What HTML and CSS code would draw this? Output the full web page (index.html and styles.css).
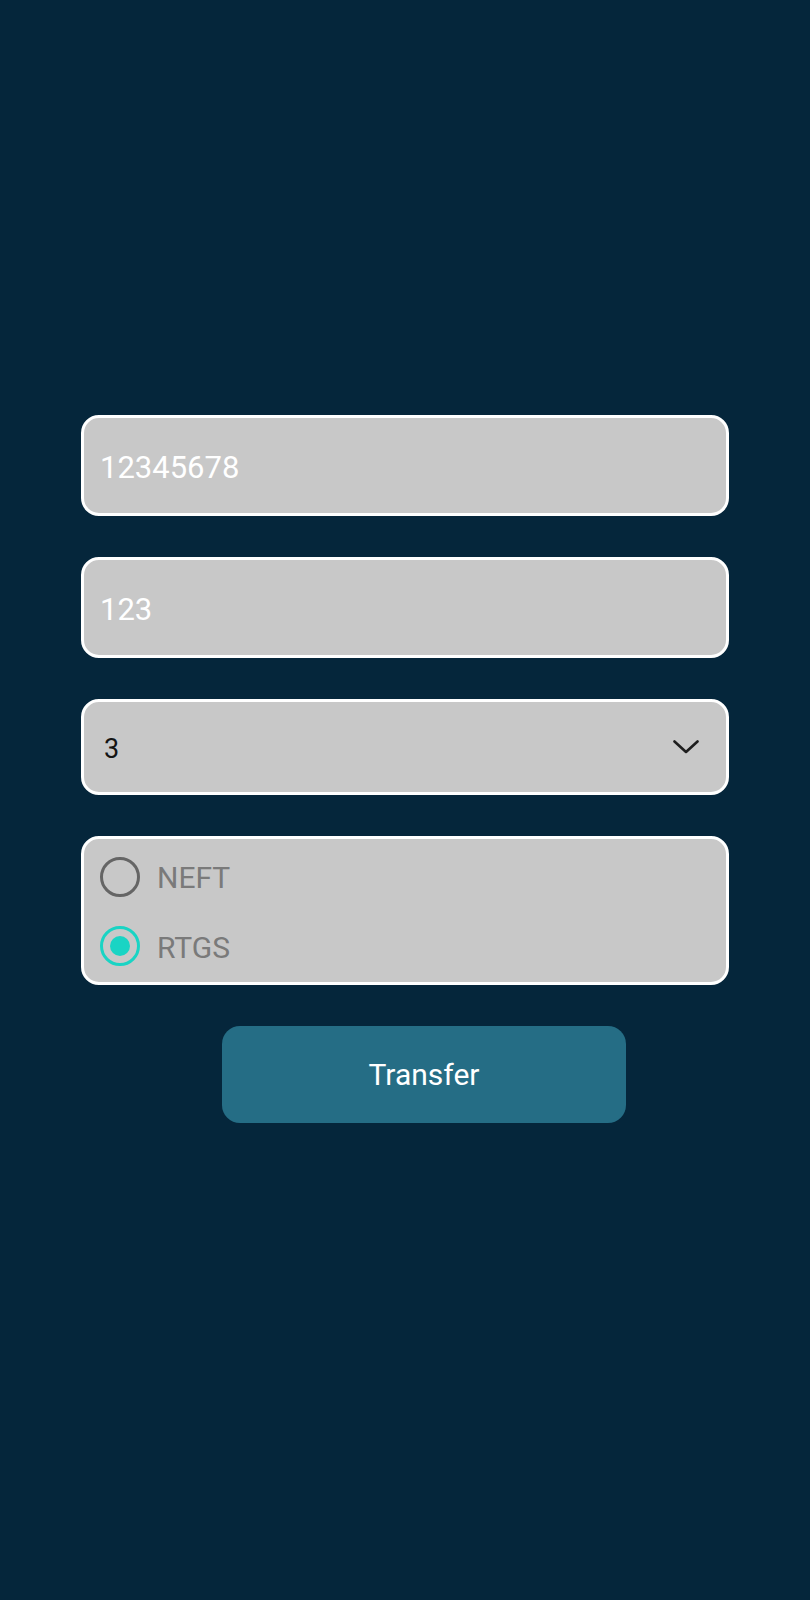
FILE: index.html
```
<!DOCTYPE html>
<html>
<head>
<meta charset="utf-8">
<link rel="stylesheet" href="styles.css">
</head>
<body>
<main class="form">
  <div class="field"><span class="val light">12345678</span></div>
  <div class="field"><span class="val light">123</span></div>
  <div class="field spinner">
    <span class="val dark">3</span>
    <svg class="chev" width="26" height="14" viewBox="0 0 26 14"><path d="M1.5 1.5 L13 12 L24.5 1.5" fill="none" stroke="#1e1e1e" stroke-width="2.6" stroke-linecap="round" stroke-linejoin="round"/></svg>
  </div>
  <div class="field radios">
    <div class="row"><span class="radio"></span><span class="lbl">NEFT</span></div>
    <div class="row"><span class="radio on"></span><span class="lbl">RTGS</span></div>
  </div>
  <button class="btn">Transfer</button>
</main>
</body>
</html>
```
FILE: styles.css
```
html, body {
  margin: 0;
  padding: 0;
  background: #05263b;
  font-family: Roboto, "Noto Sans", sans-serif;
}
body {
  min-height: 1600px;
}
.form {
  width: 648px;
  margin: 0 auto;
  padding-top: 415px;
  display: flex;
  flex-direction: column;
  gap: 41px;
}
.field {
  box-sizing: border-box;
  height: 101px;
  background: #c8c8c8;
  border: 3px solid #ffffff;
  border-radius: 18px;
  display: flex;
  align-items: center;
  padding: 0 16px;
}
.val {
  font-size: 31px;
  line-height: 1;
}
.light {
  color: #ffffff;
  margin-top: 3px;
}
.spinner {
  height: 96px;
  justify-content: space-between;
  padding: 0 27px 0 20px;
}
.dark {
  color: #141414;
  font-size: 27px;
  margin-top: 4px;
}
.chev {
  display: block;
}
.radios {
  height: 149px;
  flex-direction: column;
  align-items: stretch;
  padding: 3px 16px 1px;
}
.row {
  height: 71px;
  display: flex;
  align-items: center;
  gap: 17px;
}
.radio {
  box-sizing: border-box;
  width: 40px;
  height: 40px;
  border-radius: 50%;
  border: 3.5px solid #656565;
  display: flex;
  align-items: center;
  justify-content: center;
}
.radio.on {
  border-color: #19d4c4;
}
.radio.on::after {
  content: "";
  width: 20px;
  height: 20px;
  border-radius: 50%;
  background: #19d4c4;
}
.lbl {
  font-size: 30px;
  color: #7a7a7a;
  line-height: 1;
  margin-top: 3px;
}
.btn {
  align-self: flex-start;
  margin-left: 141px;
  width: 404px;
  height: 97px;
  border: none;
  border-radius: 18px;
  background: #256d85;
  color: #ffffff;
  font-family: Roboto, "Noto Sans", sans-serif;
  font-size: 30px;
  padding: 0;
}
```
